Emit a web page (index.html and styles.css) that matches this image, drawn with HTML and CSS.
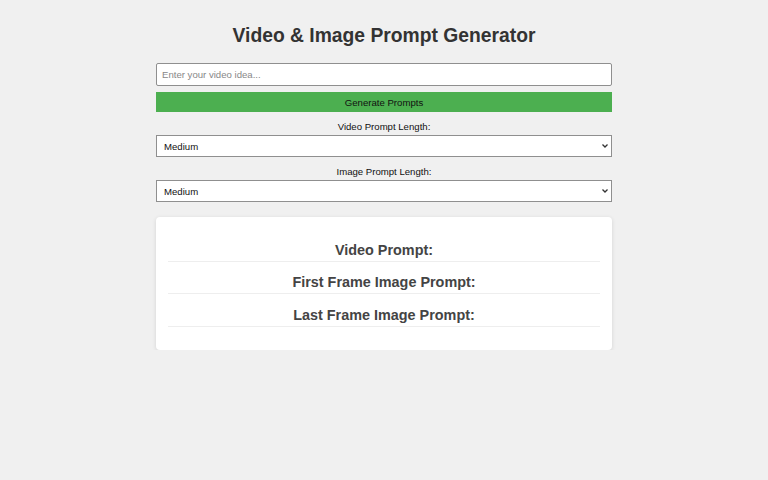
FILE: index.html
```html
<!DOCTYPE html>
<html lang="en">
<head>
<meta charset="utf-8">
<title>Video & Image Prompt Generator</title>
<link rel="stylesheet" href="styles.css">
</head>
<body>
<main class="container">
  <h1 class="title">Video &amp; Image Prompt Generator</h1>
  <input class="idea-input" type="text" placeholder="Enter your video idea...">
  <button class="generate-btn" type="button">Generate Prompts</button>
  <label class="field-label" for="video-length">Video Prompt Length:</label>
  <div class="select-wrap">
    <select class="length-select" id="video-length">
      <option>Short</option>
      <option selected>Medium</option>
      <option>Long</option>
    </select>
    <svg class="chevron" width="6" height="4" viewBox="0 0 6 4" aria-hidden="true"><path d="M0.5 0.5 L3 3 L5.5 0.5" fill="none" stroke="#333" stroke-width="1.3"/></svg>
  </div>
  <label class="field-label" for="image-length">Image Prompt Length:</label>
  <div class="select-wrap">
    <select class="length-select" id="image-length">
      <option>Short</option>
      <option selected>Medium</option>
      <option>Long</option>
    </select>
    <svg class="chevron" width="6" height="4" viewBox="0 0 6 4" aria-hidden="true"><path d="M0.5 0.5 L3 3 L5.5 0.5" fill="none" stroke="#333" stroke-width="1.3"/></svg>
  </div>
  <section class="results">
    <div class="result-section"><h3 class="result-title">Video Prompt:</h3></div>
    <div class="result-section"><h3 class="result-title">First Frame Image Prompt:</h3></div>
    <div class="result-section"><h3 class="result-title">Last Frame Image Prompt:</h3></div>
  </section>
</main>
</body>
</html>
```

FILE: styles.css
```css
html, body {
  margin: 0;
  padding: 0;
  background: #f0f0f0;
  font-family: "Liberation Sans", Arial, sans-serif;
  color: #333;
}

.container {
  width: 456px;
  margin: 0 auto;
  padding-top: 23px;
  display: flex;
  flex-direction: column;
}

.title {
  margin: 0 0 14px;
  font-size: 19.3px;
  line-height: 26px;
  font-weight: bold;
  text-align: center;
  color: #333;
}

.idea-input {
  box-sizing: border-box;
  width: 100%;
  height: 23px;
  margin: 0;
  padding: 0 5px;
  border: 1px solid #8f8f8f;
  border-radius: 2px;
  background: #fff;
  font-family: "Liberation Sans", Arial, sans-serif;
  font-size: 9.6px;
  color: #333;
}

.idea-input::placeholder {
  color: #888;
}

.generate-btn {
  box-sizing: border-box;
  width: 100%;
  height: 20px;
  margin: 6px 0 0;
  padding: 0;
  border: none;
  background: #4caf50;
  font-family: "Liberation Sans", Arial, sans-serif;
  font-size: 9.6px;
  color: #111;
}

.field-label {
  margin-top: 9px;
  font-size: 9.6px;
  line-height: 12px;
  text-align: center;
  color: #111;
}

.select-wrap {
  position: relative;
  margin-top: 2px;
}

.length-select {
  display: block;
  box-sizing: border-box;
  width: 100%;
  height: 22px;
  margin: 0;
  padding: 0 7px;
  border: 1px solid #8f8f8f;
  border-radius: 0;
  background: #fff;
  appearance: none;
  -webkit-appearance: none;
  font-family: "Liberation Sans", Arial, sans-serif;
  font-size: 9.6px;
  color: #111;
}

.chevron {
  position: absolute;
  right: 4px;
  top: 9px;
  pointer-events: none;
}

.results {
  margin-top: 15px;
  padding: 12px 12px 23px;
  background: #fff;
  border-radius: 4px;
  box-shadow: 0 1px 4px rgba(0, 0, 0, 0.12);
}

.result-section {
  padding: 11.5px 0 2px;
  border-bottom: 1px solid #eee;
}

.result-title {
  margin: 0;
  font-size: 14.4px;
  line-height: 18px;
  font-weight: bold;
  text-align: center;
  color: #444;
}
```
